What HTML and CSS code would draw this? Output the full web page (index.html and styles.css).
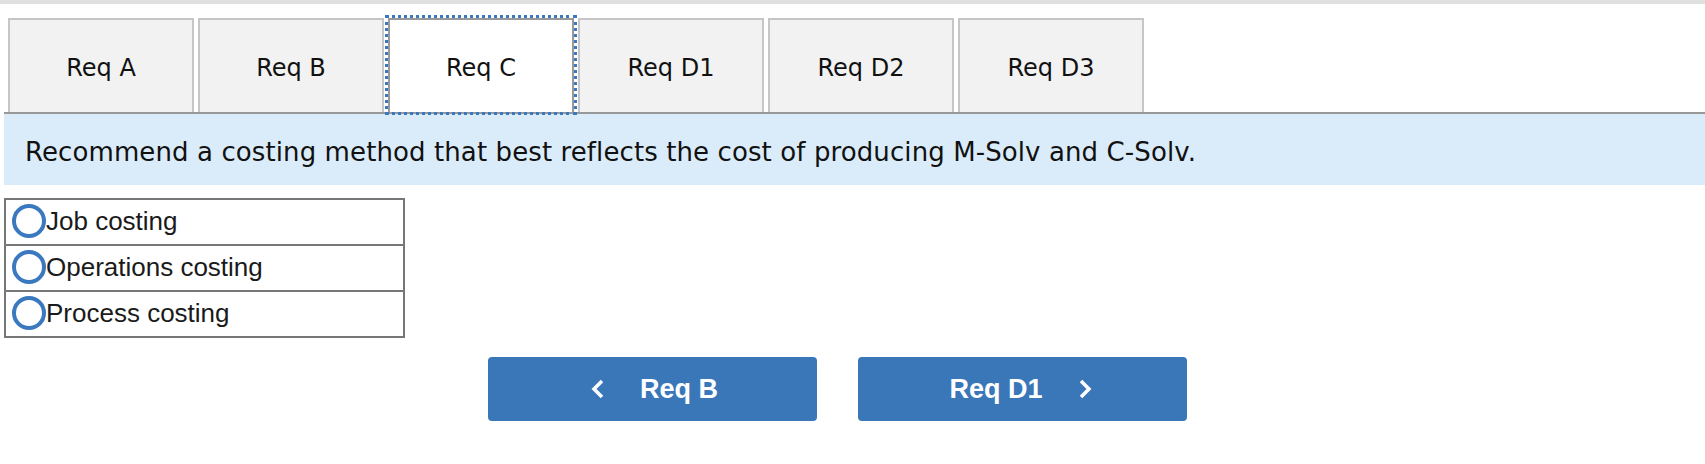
FILE: index.html
```html
<!DOCTYPE html>
<html lang="en">
<head>
  <meta charset="UTF-8" />
  <title>Req C</title>
  <link rel="stylesheet" href="styles.css">
</head>
<body>

  <div class="topbar"></div>

  <div class="page">
    <div class="tabs">
      <div class="tab">Req A</div>
      <div class="tab">Req B</div>
      <div class="tab active">Req C</div>
      <div class="tab">Req D1</div>
      <div class="tab">Req D2</div>
      <div class="tab">Req D3</div>
    </div>

    <div class="question">
      Recommend a costing method that best reflects the cost of producing M-Solv and C-Solv.
    </div>

    <table class="options">
      <tr><td><span class="radio"></span>Job costing</td></tr>
      <tr><td><span class="radio"></span>Operations costing</td></tr>
      <tr><td><span class="radio"></span>Process costing</td></tr>
    </table>

    <div class="nav">
      <button class="nav-btn prev">
        <svg class="chev" viewBox="0 0 14 22" width="14" height="22"><path d="M11 3 L3 11 L11 19" /></svg>
        <span>Req B</span>
      </button>
      <button class="nav-btn next">
        <span>Req D1</span>
        <svg class="chev" viewBox="0 0 14 22" width="14" height="22"><path d="M3 3 L11 11 L3 19" /></svg>
      </button>
    </div>
  </div>

</body>
</html>
```

FILE: styles.css
```css
* {
  box-sizing: border-box;
  margin: 0;
  padding: 0;
}

body {
  background-color: #fff;
  color: #222;
  font-family: "DejaVu Sans", Verdana, sans-serif;
}

.topbar {
  height: 4px;
  background-color: #e0e0e0;
  margin-bottom: 14px;
}

.page {
  padding-left: 4px;
}

.tabs {
  display: flex;
  gap: 4px;
  padding-left: 4px;
  border-bottom: 2px solid #999;
}

.tab {
  width: 186px;
  height: 94px;
  padding-top: 4px;
  background-color: #f2f2f2;
  border: 2px solid #c6c6c6;
  border-bottom: none;
  display: flex;
  align-items: center;
  justify-content: center;
  font-size: 24px;
  color: #111;
}

.tab.active {
  background-color: #fff;
  border-color: #999;
  outline: 3px dotted #3a78c0;
  outline-offset: 0;
}

.question {
  background-color: #daecf9;
  height: 71px;
  padding: 5px 0 0 21px;
  display: flex;
  align-items: center;
  font-size: 26px;
  letter-spacing: 0.1px;
  color: #111;
}

.options {
  margin-top: 13px;
  width: 401px;
  border-collapse: collapse;
  border: 2px solid #777;
}

.options td {
  border: 2px solid #777;
  height: 46px;
  padding: 0 0 0 6px;
  font-family: "Liberation Sans", Arial, sans-serif;
  font-size: 26px;
  color: #1a1a1a;
  white-space: nowrap;
}

.radio {
  display: inline-block;
  width: 34px;
  height: 34px;
  border: 4px solid #3a78c0;
  border-radius: 50%;
  vertical-align: middle;
  margin-top: -4px;
}

.nav {
  display: flex;
  gap: 41px;
  padding: 19px 0 0 484px;
}

.nav-btn {
  width: 329px;
  height: 64px;
  background-color: #3a77b9;
  border: none;
  border-radius: 4px;
  color: #fff;
  font-family: "Liberation Sans", Arial, sans-serif;
  font-weight: bold;
  font-size: 27px;
  display: flex;
  align-items: center;
  justify-content: center;
  gap: 35px;
  cursor: pointer;
}

.nav-btn.prev {
  padding-left: 4px;
}

.nav-btn.next {
  padding-right: 4px;
}

.chev path {
  fill: none;
  stroke: #fff;
  stroke-width: 3.5;
}
```
